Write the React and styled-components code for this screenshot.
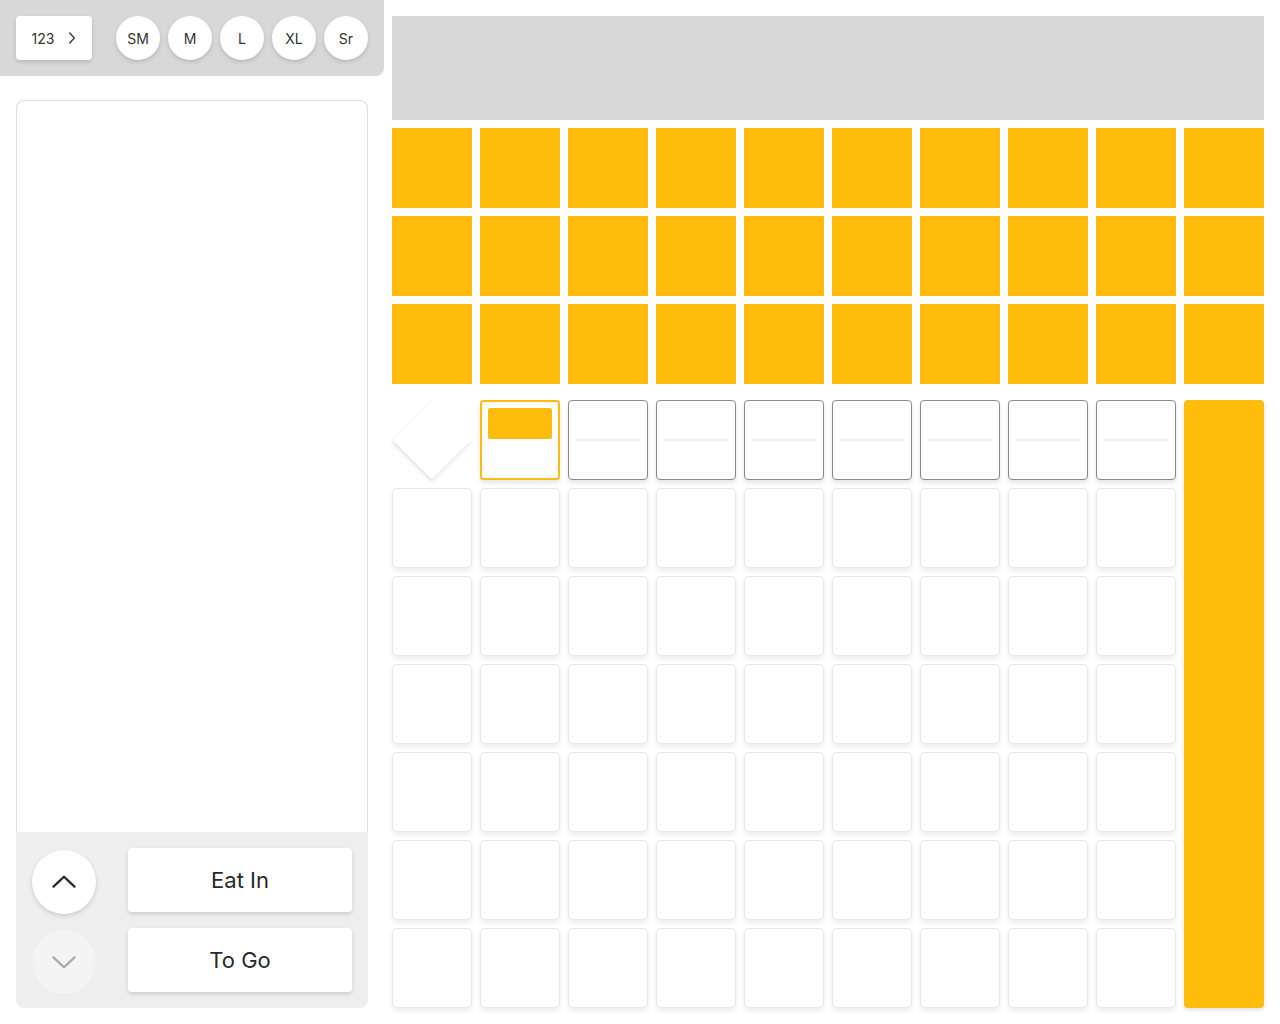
import React from 'react';
import styled, { createGlobalStyle } from 'styled-components';

const YELLOW = '#ffbc0d';

const GlobalStyle = createGlobalStyle`
  html, body {
    margin: 0;
    padding: 0;
    background: #fff;
    font-family: Inter, "Liberation Sans", sans-serif;
    color: #333;
  }
`;

const Page = styled.div`
  display: flex;
  gap: 8px;
  width: 1280px;
  height: 1024px;
  box-sizing: border-box;
`;

const Sidebar = styled.aside`
  width: 384px;
  display: flex;
  flex-direction: column;
`;

const Toolbar = styled.div`
  height: 76px;
  background: #d8d8d8;
  border-bottom-right-radius: 8px;
  display: flex;
  align-items: center;
  padding: 0 16px;
  box-sizing: border-box;
`;

const KeypadButton = styled.button`
  width: 76px;
  height: 44px;
  border: none;
  border-radius: 4px;
  background: #fff;
  box-shadow: 0 2px 4px rgba(0, 0, 0, 0.15);
  display: flex;
  align-items: center;
  justify-content: center;
  gap: 10px;
  font-family: inherit;
  font-size: 14px;
  color: #333;
  margin-right: 24px;
  padding: 0 0 0 4px;
`;

const SizeGroup = styled.div`
  display: flex;
  gap: 8px;
`;

const SizeButton = styled.button`
  width: 44px;
  height: 44px;
  border-radius: 50%;
  border: none;
  background: #fff;
  box-shadow: 0 2px 4px rgba(0, 0, 0, 0.15);
  font-family: inherit;
  font-size: 14px;
  color: #333;
  padding: 0;
`;

const OrderPanel = styled.section`
  margin: 24px 16px 16px;
  flex: 1;
  display: flex;
  flex-direction: column;
`;

const OrderList = styled.div`
  flex: 1;
  border: 1px solid #dedede;
  border-bottom: none;
  border-radius: 8px 8px 0 0;
`;

const OrderFooter = styled.div`
  height: 176px;
  background: #eeeeee;
  border-radius: 0 0 8px 8px;
  padding: 16px;
  box-sizing: border-box;
  display: grid;
  grid-template-columns: 64px 1fr;
  grid-template-rows: 64px 64px;
  column-gap: 32px;
  row-gap: 16px;
  align-items: center;
`;

const ScrollButton = styled.button`
  width: 64px;
  height: 64px;
  border-radius: 50%;
  border: none;
  padding: 0;
  margin-top: 4px;
  display: flex;
  align-items: center;
  justify-content: center;
  background: ${(p) => (p.$disabled ? '#f4f4f4' : '#fff')};
  box-shadow: ${(p) => (p.$disabled ? 'none' : '0 2px 4px rgba(0, 0, 0, 0.15)')};
  color: ${(p) => (p.$disabled ? '#aaa' : '#292929')};
`;

const ModeButton = styled.button`
  height: 64px;
  border: none;
  border-radius: 4px;
  background: #fff;
  box-shadow: 0 2px 4px rgba(0, 0, 0, 0.15);
  font-family: inherit;
  font-size: 22px;
  color: #292929;
`;

const Main = styled.main`
  width: 872px;
  padding-top: 16px;
  display: flex;
  flex-direction: column;
`;

const Banner = styled.div`
  height: 104px;
  background: #d8d8d8;
`;

const CategoryGrid = styled.div`
  margin-top: 8px;
  display: grid;
  grid-template-columns: repeat(10, 80px);
  grid-auto-rows: 80px;
  gap: 8px;
`;

const Category = styled.div`
  background: ${YELLOW};
`;

const ItemGrid = styled.div`
  margin-top: 16px;
  display: grid;
  grid-template-columns: repeat(10, 80px);
  grid-template-rows: repeat(7, 80px);
  gap: 8px;
`;

const DiamondCell = styled.div`
  display: flex;
  align-items: center;
  justify-content: center;
`;

const Diamond = styled.div`
  width: 56px;
  height: 56px;
  background: #fff;
  transform: rotate(45deg);
  box-shadow: 1px 2px 4px rgba(0, 0, 0, 0.12);
`;

const Tab = styled.div`
  box-sizing: border-box;
  border-radius: 4px;
  background: #fff;
  border: ${(p) => (p.$active ? `2px solid ${YELLOW}` : '1px solid #8c8c8c')};
  box-shadow: 0 3px 5px rgba(0, 0, 0, 0.1);
  padding: ${(p) => (p.$active ? '6px' : '0 7px')};
  display: flex;
  flex-direction: column;
  justify-content: ${(p) => (p.$active ? 'flex-start' : 'center')};
`;

const TabFill = styled.div`
  height: 31px;
  background: ${YELLOW};
  border-radius: 2px;
`;

const TabLine = styled.div`
  height: 2px;
  background: #f0f0f0;
`;

const SideBar = styled.div`
  grid-column: 10;
  grid-row: 1 / span 7;
  background: ${YELLOW};
  border-radius: 4px;
  box-shadow: 0 2px 4px rgba(0, 0, 0, 0.12);
`;

const Item = styled.div`
  box-sizing: border-box;
  background: #fff;
  border: 1px solid #e8e8e8;
  border-radius: 4px;
  box-shadow: 0 3px 5px rgba(0, 0, 0, 0.08);
`;

const Chevron = ({ dir, size = 28, width = 2 }) => (
  <svg width={size} height={size} viewBox="0 0 24 24" fill="none" stroke="currentColor" strokeWidth={width} strokeLinecap="round" strokeLinejoin="round">
    {dir === 'up' && <polyline points="3 16 12 7.5 21 16" />}
    {dir === 'down' && <polyline points="3 8 12 16.5 21 8" />}
    {dir === 'right' && <polyline points="8.5 4.5 15.5 12 8.5 19.5" />}
  </svg>
);

const sizes = ['SM', 'M', 'L', 'XL', 'Sr'];

export default function App() {
  return (
    <>
      <GlobalStyle />
      <Page>
        <Sidebar>
          <Toolbar>
            <KeypadButton>
              123
              <Chevron dir="right" size={16} width={1.9} />
            </KeypadButton>
            <SizeGroup>
              {sizes.map((s) => (
                <SizeButton key={s}>{s}</SizeButton>
              ))}
            </SizeGroup>
          </Toolbar>
          <OrderPanel>
            <OrderList />
            <OrderFooter>
              <ScrollButton>
                <Chevron dir="up" />
              </ScrollButton>
              <ModeButton>Eat In</ModeButton>
              <ScrollButton $disabled>
                <Chevron dir="down" />
              </ScrollButton>
              <ModeButton>To Go</ModeButton>
            </OrderFooter>
          </OrderPanel>
        </Sidebar>
        <Main>
          <Banner />
          <CategoryGrid>
            {Array.from({ length: 30 }).map((_, i) => (
              <Category key={i} />
            ))}
          </CategoryGrid>
          <ItemGrid>
            <DiamondCell>
              <Diamond />
            </DiamondCell>
            <Tab $active>
              <TabFill />
            </Tab>
            {Array.from({ length: 7 }).map((_, i) => (
              <Tab key={i}>
                <TabLine />
              </Tab>
            ))}
            <SideBar />
            {Array.from({ length: 54 }).map((_, i) => (
              <Item key={i} />
            ))}
          </ItemGrid>
        </Main>
      </Page>
    </>
  );
}
